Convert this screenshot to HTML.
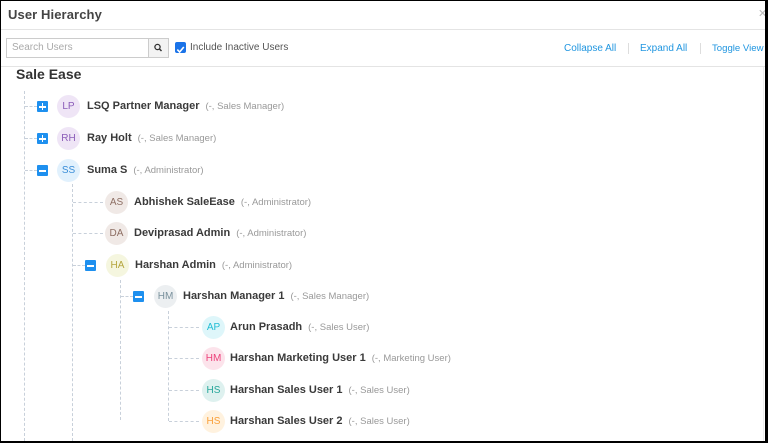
<!DOCTYPE html>
<html><head><meta charset="utf-8"><style>
*{margin:0;padding:0;box-sizing:border-box}
body{width:768px;height:443px;background:#000;position:relative;overflow:hidden;font-family:"Liberation Sans",sans-serif}
#w{position:absolute;left:1px;top:1px;width:764px;height:440px;background:#fff;overflow:hidden}
.a{position:absolute}
.t{position:absolute;left:7px;top:6px;font-size:13px;font-weight:bold;color:#444;letter-spacing:0.1px}
.x{position:absolute;left:757px;top:6px;color:#bbb;font-size:11px}
.hl{position:absolute;left:0;width:764px;height:1px;background:#e4e4e4}
.in{position:absolute;left:5px;top:37px;width:143px;height:20px;border:1px solid #ccc;font-size:10px;color:#aaa;padding:3px 5px}
.bt{position:absolute;left:147px;top:37px;width:21px;height:20px;border:1px solid #ccc;background:#f3f3f3}
.cb{position:absolute;left:174px;top:41px;width:11px;height:11px;background:#1a73e8;border-radius:2px}
.lab{position:absolute;left:189px;top:41px;font-size:10px;color:#555}
.lk{position:absolute;top:42px;font-size:10px;color:#2196e0;white-space:nowrap}
.sep{position:absolute;top:42px;width:1px;height:11px;background:#ddd}
.se{position:absolute;left:15px;top:65px;font-size:14px;font-weight:bold;color:#333}
.vl{position:absolute;width:0;border-left:1px dashed #c8d0da}
.hz{position:absolute;height:0;border-top:1px dashed #c8d0da}
.bx{position:absolute;width:11px;height:11px;background:#1e90ef;border-radius:1px}
.bx:before{content:"";position:absolute;left:2px;top:5px;width:7px;height:1.5px;background:#fff}
.p:after{content:"";position:absolute;left:4.7px;top:2px;width:1.5px;height:7px;background:#fff}
.av{position:absolute;width:23px;height:23px;border-radius:50%;font-size:10px;text-align:center;line-height:23px}
.n{position:absolute;font-size:11px;white-space:nowrap;font-weight:bold;color:#3a3a3a}
.n span{font-weight:normal;color:#999;font-size:9.5px;margin-left:6px}
</style></head><body><div id="w">
<div class="t">User Hierarchy</div><div class="x">✕</div>
<div class="hl" style="top:28px"></div>
<div class="in">Search Users</div>
<div class="bt"><svg width="19" height="18"><circle cx="8.5" cy="8" r="2.6" stroke="#333" stroke-width="1.3" fill="none"/><line x1="10.5" y1="10" x2="12.5" y2="12" stroke="#333" stroke-width="1.5"/></svg></div>
<div class="cb"><svg width="11" height="11"><path d="M2.3 5.6 L4.6 8 L8.8 3" stroke="#fff" stroke-width="1.6" fill="none"/></svg></div>
<div class="lab">Include Inactive Users</div>
<div class="lk" style="left:563px">Collapse All</div><div class="sep" style="left:627px"></div>
<div class="lk" style="left:639px">Expand All</div><div class="sep" style="left:699px"></div>
<div class="lk" style="left:711px;font-size:9.6px">Toggle View</div>
<div class="hl" style="top:65px"></div>
<div class="a" style="left:762px;top:66px;width:1px;height:374px;background:#eee"></div>
<div class="se">Sale Ease</div>

<div class="vl" style="left:23px;top:90px;height:350px"></div>
<div class="hz" style="left:24px;top:105px;width:12px"></div>
<div class="hz" style="left:24px;top:137px;width:12px"></div>
<div class="hz" style="left:24px;top:169px;width:12px"></div>
<div class="vl" style="left:71px;top:183px;height:257px"></div>
<div class="hz" style="left:72px;top:201px;width:30px"></div>
<div class="hz" style="left:72px;top:232px;width:30px"></div>
<div class="hz" style="left:72px;top:264px;width:12px"></div>
<div class="vl" style="left:119px;top:279px;height:140px"></div>
<div class="hz" style="left:120px;top:295px;width:12px"></div>
<div class="vl" style="left:167px;top:310px;height:110px"></div>
<div class="hz" style="left:168px;top:326px;width:30px"></div>
<div class="hz" style="left:168px;top:357px;width:30px"></div>
<div class="hz" style="left:168px;top:389px;width:30px"></div>
<div class="hz" style="left:168px;top:420px;width:30px"></div>

<div class="bx p" style="left:36px;top:100px"></div>
<div class="av" style="left:56px;top:94px;background:#efe5f6;color:#8b5cb8">LP</div>
<div class="n" style="left:86px;top:99px">LSQ Partner Manager<span>(-, Sales Manager)</span></div>

<div class="bx p" style="left:36px;top:132px"></div>
<div class="av" style="left:56px;top:126px;background:#efe5f6;color:#8b5cb8">RH</div>
<div class="n" style="left:86px;top:131px">Ray Holt<span>(-, Sales Manager)</span></div>

<div class="bx" style="left:36px;top:164px"></div>
<div class="av" style="left:56px;top:158px;background:#e1f1fd;color:#3a8ed8">SS</div>
<div class="n" style="left:86px;top:163px">Suma S<span>(-, Administrator)</span></div>

<div class="av" style="left:104px;top:190px;background:#f0e9e6;color:#8d6e63">AS</div>
<div class="n" style="left:133px;top:195px">Abhishek SaleEase<span>(-, Administrator)</span></div>

<div class="av" style="left:104px;top:221px;background:#f0e9e6;color:#8d6e63">DA</div>
<div class="n" style="left:133px;top:226px">Deviprasad Admin<span>(-, Administrator)</span></div>

<div class="bx" style="left:84px;top:259px"></div>
<div class="av" style="left:105px;top:253px;background:#f5f6df;color:#b4a53e">HA</div>
<div class="n" style="left:134px;top:258px">Harshan Admin<span>(-, Administrator)</span></div>

<div class="bx" style="left:132px;top:290px"></div>
<div class="av" style="left:153px;top:284px;background:#eceff1;color:#78909c">HM</div>
<div class="n" style="left:182px;top:289px">Harshan Manager 1<span>(-, Sales Manager)</span></div>

<div class="av" style="left:201px;top:315px;background:#def6fa;color:#22bdd4">AP</div>
<div class="n" style="left:229px;top:320px">Arun Prasadh<span>(-, Sales User)</span></div>

<div class="av" style="left:201px;top:346px;background:#fce3eb;color:#ec407a">HM</div>
<div class="n" style="left:229px;top:351px">Harshan Marketing User 1<span>(-, Marketing User)</span></div>

<div class="av" style="left:201px;top:378px;background:#def1ef;color:#26a69a">HS</div>
<div class="n" style="left:229px;top:383px">Harshan Sales User 1<span>(-, Sales User)</span></div>

<div class="av" style="left:201px;top:409px;background:#fff2df;color:#f9a03a">HS</div>
<div class="n" style="left:229px;top:414px">Harshan Sales User 2<span>(-, Sales User)</span></div>
</div></body></html>
